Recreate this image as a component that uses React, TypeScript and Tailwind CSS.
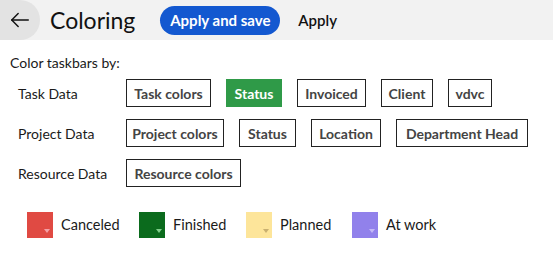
import React from "react";

const font = { fontFamily: '"Lato", "Open Sans", sans-serif' };

type Btn = { label: string; w: string; active?: boolean };

const rows: { name: string; buttons: Btn[] }[] = [
  {
    name: "Task Data",
    buttons: [
      { label: "Task colors", w: "w-[85px]" },
      { label: "Status", w: "w-[56px]", active: true },
      { label: "Invoiced", w: "w-[69px]" },
      { label: "Client", w: "w-[52px]" },
      { label: "vdvc", w: "w-[44px]" },
    ],
  },
  {
    name: "Project Data",
    buttons: [
      { label: "Project colors", w: "w-[98px]" },
      { label: "Status", w: "w-[57px]" },
      { label: "Location", w: "w-[70px]" },
      { label: "Department Head", w: "w-[132px]" },
    ],
  },
  {
    name: "Resource Data",
    buttons: [{ label: "Resource colors", w: "w-[115px]" }],
  },
];

const legend = [
  { label: "Canceled", bg: "bg-[#e04a43]", tri: "border-t-[#f5a0a6]", w: "w-[112px]" },
  { label: "Finished", bg: "bg-[#0b6b1d]", tri: "border-t-[#7fd08a]", w: "w-[107px]" },
  { label: "Planned", bg: "bg-[#fde59a]", tri: "border-t-[#c9b070]", w: "w-[106px]" },
  { label: "At work", bg: "bg-[#9181eb]", tri: "border-t-[#c3b8f7]", w: "w-[100px]" },
];

export default function App() {
  return (
    <div className="w-[553px] h-[260px] bg-white overflow-hidden" style={font}>
      <div className="h-10 bg-[#f2f2f2] flex items-center">
        <div className="w-10 h-10 rounded-r-full rounded-l-[14px] bg-[#e3e3e3] flex items-center justify-center">
          <svg width="22" height="22" viewBox="0 0 24 24" fill="none" stroke="#111" strokeWidth="1.6" strokeLinecap="round" strokeLinejoin="round">
            <path d="M21 12H3" />
            <path d="M10 5l-7 7 7 7" />
          </svg>
        </div>
        <div className="ml-[10px] text-[23px] text-[#111] leading-none">Coloring</div>
        <div className="ml-[25px] h-[29px] w-[120px] rounded-full bg-[#1358d0] text-white text-[15px] font-bold flex items-center justify-center">
          Apply and save
        </div>
        <div className="ml-[18px] text-[15px] font-semibold text-[#111]">Apply</div>
      </div>
      <div className="pl-[10px] pt-[16px] text-[14px] text-[#1a1a1a] leading-none">Color taskbars by:</div>
      <div className="mt-[9px] flex flex-col gap-3 pl-[18px]">
        {rows.map((r) => (
          <div key={r.name} className="flex items-center">
            <div className="w-[108px] text-[14px] text-[#1a1a1a]">{r.name}</div>
            <div className="flex gap-[15px]">
              {r.buttons.map((b) => (
                <div
                  key={b.label}
                  className={`${b.w} h-7 flex items-center justify-center text-[14px] font-bold whitespace-nowrap ${
                    b.active ? "bg-[#2f9a48] text-white" : "border border-[#222] text-[#444]"
                  }`}
                >
                  {b.label}
                </div>
              ))}
            </div>
          </div>
        ))}
      </div>
      <div className="mt-[25px] pl-[27px] flex items-center">
        {legend.map((l) => (
          <div key={l.label} className={`flex items-center gap-2 ${l.w}`}>
            <div className={`relative w-[26px] h-[26px] ${l.bg}`}>
              <div className={`absolute left-[17px] bottom-[5px] w-0 h-0 border-l-[3px] border-r-[3px] border-t-[4px] border-l-transparent border-r-transparent ${l.tri}`} />
            </div>
            <div className="text-[14.5px] text-[#1a1a1a]">{l.label}</div>
          </div>
        ))}
      </div>
    </div>
  );
}
